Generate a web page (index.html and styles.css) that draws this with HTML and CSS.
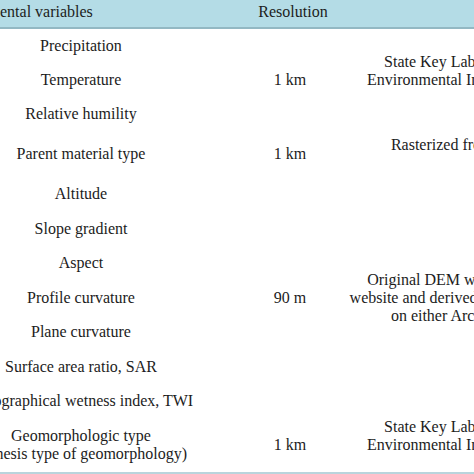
FILE: index.html
```html
<!DOCTYPE html>
<html lang="en">
<head>
<meta charset="utf-8">
<title>Environmental variables</title>
<link rel="stylesheet" href="styles.css">
</head>
<body>
<div class="table">
  <div class="head">
    <div class="hc hc-var">Environmental variables</div>
    <div class="hc hc-res">Resolution</div>
    <div class="hc hc-src">Source</div>
  </div>
  <div class="body">
    <div class="cell var">Precipitation</div>
    <div class="cell var">Temperature</div>
    <div class="cell var">Relative humility</div>
    <div class="cell var">Parent material type</div>
    <div class="cell var">Altitude</div>
    <div class="cell var">Slope gradient</div>
    <div class="cell var">Aspect</div>
    <div class="cell var">Profile curvature</div>
    <div class="cell var">Plane curvature</div>
    <div class="cell var">Surface area ratio, SAR</div>
    <div class="cell var">Topographical wetness index, TWI</div>
    <div class="cell var">Geomorphologic type<br>(genesis type of geomorphology)</div>

    <div class="cell res g1">1 km</div>
    <div class="cell src g1">State Key Laboratory of Resources and<br>Environmental Information System, Chinese<br>(RESDC)</div>

    <div class="cell res g2">1 km</div>
    <div class="cell src g2">Rasterized from the 1:1,000,000 map<br>of the soils</div>

    <div class="cell res g3">90 m</div>
    <div class="cell src g3">Original DEM was downloaded from SRTM<br>website and derived from it by the terrain analysis<br>on either ArcGIS or SAGA GIS tools</div>

    <div class="cell res g4">1 km</div>
    <div class="cell src g4">State Key Laboratory of Resources and<br>Environmental Information System, Chinese<br>(RESDC)</div>
  </div>
</div>
</body>
</html>
```
FILE: styles.css
```css
html, body {
  margin: 0;
  padding: 0;
  overflow: hidden;
  background: #ffffff;
}

body {
  font-family: "Liberation Serif", "Times New Roman", serif;
  font-size: 16px;
  color: #1c1c1c;
}

.table {
  width: 740px;
  margin-left: -69px;
}

.head {
  display: grid;
  grid-template-columns: 300px 118px 322px;
  height: 27px;
  background: #b4dce6;
  border-bottom: 2px solid #93b8c3;
}

.hc {
  line-height: 23px;
  white-space: nowrap;
  text-align: center;
}

.hc-var {
  text-align: left;
  padding-left: 5px;
}

.hc-res {
  padding-left: 6px;
}

.body {
  display: grid;
  grid-template-columns: 300px 118px 322px;
  grid-template-rows: 34px 34px 34px 46px repeat(7, 34.5px) 53.5px;
  border-bottom: 2px solid #b9d4dc;
}

.cell {
  display: flex;
  align-items: center;
  justify-content: center;
  text-align: center;
  line-height: 18px;
  white-space: nowrap;
}

.var {
  grid-column: 1;
}

.res {
  grid-column: 2;
}

.src {
  grid-column: 3;
}

.g1 { grid-row: 1 / span 3; }
.g2 { grid-row: 4; }
.g3 { grid-row: 5 / span 7; }
.g4 { grid-row: 12; }
```
